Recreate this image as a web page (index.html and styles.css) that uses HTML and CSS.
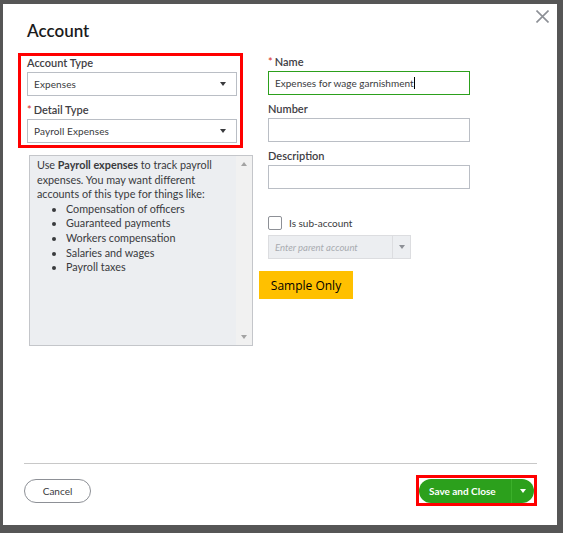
FILE: index.html
```html
<!DOCTYPE html>
<html>
<head>
<meta charset="utf-8">
<link rel="stylesheet" href="styles.css">
</head>
<body>
<div class="modal">
  <div class="close">
    <svg width="13" height="13" viewBox="0 0 13 13"><path d="M0.5 0.5 L12.5 12.5 M12.5 0.5 L0.5 12.5" stroke="#8d9096" stroke-width="1.6" fill="none"/></svg>
  </div>
  <div class="header"><h1 class="title">Account</h1></div>
  <div class="content">
    <div class="left">
      <div class="redbox">
        <div class="label">Account Type</div>
        <div class="select"><span>Expenses</span><span class="caret"></span></div>
        <div class="label label2"><span class="req">*</span>Detail Type</div>
        <div class="select"><span>Payroll Expenses</span><span class="caret"></span></div>
      </div>
      <div class="desc">
        <div class="desc-text">
          <p>Use <b>Payroll expenses</b> to track payroll expenses. You may want different accounts of this type for things like:</p>
          <ul>
            <li>Compensation of officers</li>
            <li>Guaranteed payments</li>
            <li>Workers compensation</li>
            <li>Salaries and wages</li>
            <li>Payroll taxes</li>
          </ul>
        </div>
        <div class="scrollbar">
          <span class="sb-up"></span>
          <span class="sb-down"></span>
        </div>
      </div>
    </div>
    <div class="right">
      <div class="label"><span class="req">*</span>Name</div>
      <div class="input active">Expenses for wage garnishment<span class="cursor"></span></div>
      <div class="label label2">Number</div>
      <div class="input"></div>
      <div class="label label2">Description</div>
      <div class="input"></div>
      <div class="check-row"><span class="checkbox"></span><span class="check-label">Is sub-account</span></div>
      <div class="parent">
        <span class="parent-ph">Enter parent account</span>
        <span class="parent-btn"><span class="caret light"></span></span>
      </div>
      <div class="sample">Sample Only</div>
    </div>
  </div>
  <div class="footer">
    <button class="cancel">Cancel</button>
    <div class="savebox">
      <div class="save"><span class="save-text">Save and Close</span><span class="save-arrow"><span class="caret white"></span></span></div>
    </div>
  </div>
</div>
</body>
</html>
```

FILE: styles.css
```css
html, body {
  margin: 0;
  padding: 0;
}
body {
  width: 563px;
  height: 533px;
  background: #565656;
  font-family: Lato, "Open Sans", sans-serif;
  color: #393a3d;
  overflow: hidden;
}
.modal {
  position: relative;
  margin: 4px 0 0 3px;
  width: 554px;
  height: 521px;
  background: #fff;
  display: flex;
  flex-direction: column;
  box-sizing: border-box;
}
.close {
  position: absolute;
  top: 6px;
  right: 8px;
  width: 13px;
  height: 13px;
}
.close svg { display: block; }
.header {
  height: 49px;
  box-sizing: border-box;
  padding: 16px 0 0 24px;
}
.title {
  margin: 0;
  font-size: 17px;
  line-height: 22px;
  font-weight: 600;
  color: #1b1b1c;
}
.content {
  flex: 1;
  display: flex;
  padding-left: 15px;
}
.left {
  width: 235px;
  display: flex;
  flex-direction: column;
}
.redbox {
  width: 225px;
  height: 95px;
  box-sizing: border-box;
  border: 3px solid #f00;
  padding: 0 3px 0 6px;
}
.label {
  font-size: 11px;
  line-height: 14px;
  font-weight: 600;
  color: #3f4044;
  margin-bottom: 2px;
}
.label2 { margin-top: 7px; }
.req {
  color: #d52b1e;
  margin-right: 2px;
  font-weight: 400;
}
.select {
  height: 24px;
  box-sizing: border-box;
  border: 1px solid #babec5;
  display: flex;
  align-items: center;
  justify-content: space-between;
  padding: 0 10px 0 6px;
  font-size: 10px;
  letter-spacing: 0.1px;
}
.caret {
  width: 0;
  height: 0;
  border-left: 3.5px solid transparent;
  border-right: 3.5px solid transparent;
  border-top: 4px solid #393a3d;
}
.caret.light { border-top-color: #8d9096; }
.caret.white { border-top-color: #fff; }
.desc {
  margin: 7px 0 0 11px;
  width: 224px;
  height: 191px;
  box-sizing: border-box;
  border: 1px solid #c4c6ca;
  background: #eceef1;
  display: flex;
}
.desc-text {
  flex: 1;
  padding: 2px 2px 0 7px;
  font-size: 10.8px;
  line-height: 14.6px;
  color: #393a3d;
}
.desc-text p { margin: 0; }
.desc-text b { font-weight: 700; }
.desc-text ul {
  margin: 0;
  padding-left: 29px;
}
.desc-text li { line-height: 14.6px; }
.scrollbar {
  width: 16px;
  background: #f1f1f1;
  display: flex;
  flex-direction: column;
  justify-content: space-between;
  align-items: center;
  padding: 6px 0 6px;
}
.sb-up {
  width: 0; height: 0;
  border-left: 3.5px solid transparent;
  border-right: 3.5px solid transparent;
  border-bottom: 4px solid #a3a3a3;
}
.sb-down {
  width: 0; height: 0;
  border-left: 3.5px solid transparent;
  border-right: 3.5px solid transparent;
  border-top: 4px solid #a3a3a3;
}
.right {
  margin-left: 15px;
  padding-top: 2px;
  width: 202px;
  display: flex;
  flex-direction: column;
}
.input {
  height: 24px;
  box-sizing: border-box;
  border: 1px solid #babec5;
  padding: 0 6px;
  font-size: 10px;
  display: flex;
  align-items: center;
}
.input.active { border-color: #2ca01c; }
.cursor {
  display: inline-block;
  width: 1px;
  height: 12px;
  background: #000;
}
.check-row {
  margin-top: 27px;
  display: flex;
  align-items: center;
  height: 14px;
}
.checkbox {
  width: 14px;
  height: 14px;
  box-sizing: border-box;
  border: 1px solid #8d9096;
  border-radius: 2px;
}
.check-label {
  margin-left: 7px;
  font-size: 10px;
  color: #393a3d;
}
.parent {
  margin-top: 5px;
  width: 143px;
  height: 24px;
  box-sizing: border-box;
  border: 1px solid #dcdde0;
  background: #eceef1;
  display: flex;
  align-items: center;
}
.parent-ph {
  flex: 1;
  padding-left: 6px;
  font-size: 9.5px;
  font-style: italic;
  color: #a8abb0;
}
.parent-btn {
  width: 17px;
  height: 100%;
  border-left: 1px solid #dcdde0;
  display: flex;
  align-items: center;
  justify-content: center;
}
.sample {
  margin: 12px 0 0 -9px;
  width: 94px;
  height: 28px;
  background: #ffc000;
  color: #000;
  font-family: "Open Sans", sans-serif;
  font-size: 12px;
  display: flex;
  align-items: center;
  justify-content: center;
}
.footer {
  margin: 0 20px 0 21px;
  border-top: 1px solid #c8c8c8;
  padding: 11px 0 19px;
  display: flex;
  justify-content: space-between;
  align-items: center;
}
.cancel {
  width: 67px;
  height: 24px;
  border: 1px solid #8d9096;
  border-radius: 12px;
  background: #fff;
  font-family: Lato, "Open Sans", sans-serif;
  font-size: 10px;
  color: #393a3d;
  padding: 0;
  margin-top: 0;
}
.savebox {
  width: 121px;
  height: 31px;
  box-sizing: border-box;
  border: 3px solid #f00;
  display: flex;
  align-items: center;
  justify-content: center;
}
.save {
  width: 117px;
  height: 24px;
  border-radius: 12px;
  background: #2ca01c;
  display: flex;
  align-items: center;
  color: #fff;
  font-size: 10px;
  font-weight: 700;
}
.save-text {
  flex: 1;
  padding-left: 10px;
}
.save-arrow {
  width: 22px;
  height: 100%;
  border-left: 1px solid #3bb02a;
  display: flex;
  align-items: center;
  justify-content: center;
}
```
